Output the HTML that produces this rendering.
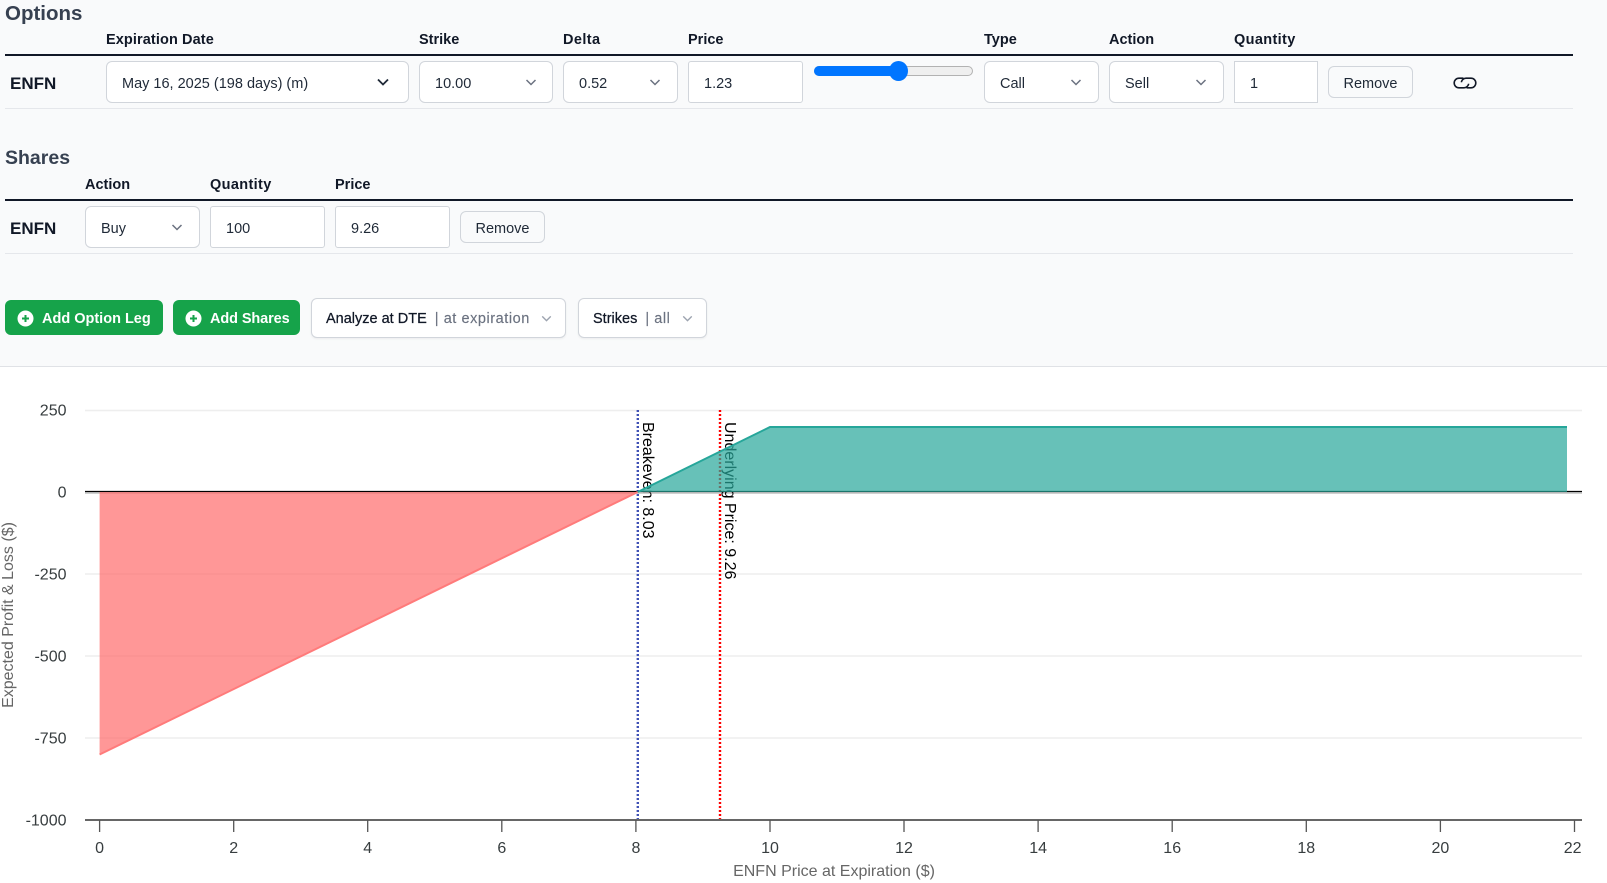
<!DOCTYPE html>
<html><head><meta charset="utf-8"><style>
html,body{margin:0;padding:0;width:1607px;height:883px;overflow:hidden;background:#f9fafb;font-family:"Liberation Sans",Arial,sans-serif;color:#111827}
.a{position:absolute;white-space:nowrap}
.h{font-weight:700;font-size:20.500px;color:#374151;line-height:24px}
.l{font-weight:700;font-size:14.500px;color:#111827;line-height:18px}
.t{font-weight:700;font-size:17px;color:#111827;line-height:22px}
.hr{position:absolute;left:5px;width:1568px;height:2px;background:#111827}
.dv{position:absolute;left:5px;width:1568px;height:1px;background:#e5e7eb}
.f{position:absolute;box-sizing:border-box;background:#fff;border:1px solid #d1d5db;font-size:14.500px;line-height:45px;color:#1f2937;padding-left:15px;white-space:nowrap}
.r{border-radius:6px}
.f svg{position:absolute;top:10px;width:20px;height:20px}
.b{position:absolute;box-sizing:border-box;border:1px solid #d1d5db;border-radius:6px;background:#f9fafb;font-size:14.500px;text-align:center;color:#1f2937;height:32px;line-height:35px}
.g{position:absolute;top:300px;height:35px;background:#16a34a;border-radius:6px;color:#fff;font-weight:700;font-size:14.500px;line-height:39px;white-space:nowrap;box-sizing:border-box}
.g svg{position:absolute;left:12px;top:9.500px;width:17px;height:17px}
.g span{position:absolute;left:37px}
.d{position:absolute;top:298px;height:40px;box-sizing:border-box;background:#fff;border:1px solid #d1d5db;border-radius:6px;box-shadow:0 1px 2px rgba(0,0,0,.06);font-size:14.500px;line-height:40px;white-space:nowrap;color:#111827}
.d i{font-style:normal;color:#6b7280;letter-spacing:.55px}
.d b{font-weight:400;position:absolute;left:14px;-webkit-text-stroke:.25px #111827}
.d i{-webkit-text-stroke:.15px #6b7280}
.d svg{position:absolute;top:11px;width:17px;height:17px}
</style></head><body>
<div class="a h" style="left:5px;top:2px">Options</div>
<div class="a l" style="left:106px;top:31px;letter-spacing:.1px">Expiration Date</div>
<div class="a l" style="left:419px;top:31px">Strike</div>
<div class="a l" style="left:563px;top:31px;letter-spacing:.4px">Delta</div>
<div class="a l" style="left:688px;top:31px">Price</div>
<div class="a l" style="left:984px;top:31px">Type</div>
<div class="a l" style="left:1109px;top:31px">Action</div>
<div class="a l" style="left:1234px;top:31px;letter-spacing:.35px">Quantity</div>
<div class="hr" style="top:54px"></div>
<div class="a t" style="left:10px;top:73px">ENFN</div>
<div class="f r" style="left:106px;top:61px;width:303px;height:42px">May 16, 2025 (198 days) (m)<svg style="left:266px" viewBox="0 0 20 20"><path d="M5 7.500l5 5 5-5" fill="none" stroke="#1f2937" stroke-width="1.800"/></svg></div>
<div class="f r" style="left:419px;top:61px;width:134px;height:42px">10.00<svg style="left:101px" viewBox="0 0 20 20"><path d="M5.500 8l4.500 4.500 4.500-4.500" fill="none" stroke="#6b7280" stroke-width="1.500"/></svg></div>
<div class="f r" style="left:563px;top:61px;width:115px;height:42px">0.52<svg style="left:81px" viewBox="0 0 20 20"><path d="M5.500 8l4.500 4.500 4.500-4.500" fill="none" stroke="#6b7280" stroke-width="1.500"/></svg></div>
<div class="f" style="left:688px;top:61px;width:115px;height:42px;border-radius:3px">1.23</div>
<div class="a" style="left:814px;top:66px;width:159px;height:10px;box-sizing:border-box;background:#efefef;border:1px solid #b2b2b2;border-radius:5px"></div>
<div class="a" style="left:814px;top:66px;width:86px;height:10px;background:#0075ff;border-radius:5px"></div>
<div class="a" style="left:888.500px;top:61px;width:19px;height:20px;background:#0075ff;border-radius:50%"></div>
<div class="f r" style="left:984px;top:61px;width:115px;height:42px">Call<svg style="left:81px" viewBox="0 0 20 20"><path d="M5.500 8l4.500 4.500 4.500-4.500" fill="none" stroke="#6b7280" stroke-width="1.500"/></svg></div>
<div class="f r" style="left:1109px;top:61px;width:115px;height:42px">Sell<svg style="left:81px" viewBox="0 0 20 20"><path d="M5.500 8l4.500 4.500 4.500-4.500" fill="none" stroke="#6b7280" stroke-width="1.500"/></svg></div>
<div class="f" style="left:1234px;top:61px;width:84px;height:42px;border-radius:0">1</div>
<div class="b" style="left:1328px;top:66px;width:85px">Remove</div>
<svg class="a" style="left:1453px;top:76px" width="24" height="14" viewBox="0 0 24 14"><g fill="none" stroke="#111827" stroke-width="1.600"><path d="M10.500 2.200H6a4.800 4.800 0 0 0 0 9.600h5a4.800 4.800 0 0 0 4.700-4"/><path d="M13.500 11.800H18a4.800 4.800 0 0 0 0-9.600h-5a4.800 4.800 0 0 0-4.700 4"/></g></svg>
<div class="dv" style="top:108px"></div>

<div class="a h" style="left:5px;top:146px;font-size:19.500px">Shares</div>
<div class="a l" style="left:85px;top:176px">Action</div>
<div class="a l" style="left:210px;top:176px;letter-spacing:.35px">Quantity</div>
<div class="a l" style="left:335px;top:176px">Price</div>
<div class="hr" style="top:199px"></div>
<div class="a t" style="left:10px;top:218px">ENFN</div>
<div class="f r" style="left:85px;top:206px;width:115px;height:42px">Buy<svg style="left:81px" viewBox="0 0 20 20"><path d="M5.500 8l4.500 4.500 4.500-4.500" fill="none" stroke="#6b7280" stroke-width="1.500"/></svg></div>
<div class="f" style="left:210px;top:206px;width:115px;height:42px;border-radius:3px">100</div>
<div class="f" style="left:335px;top:206px;width:115px;height:42px;border-radius:3px">9.26</div>
<div class="b" style="left:460px;top:211px;width:85px">Remove</div>
<div class="dv" style="top:253px"></div>

<div class="g" style="left:5px;width:158px"><svg viewBox="0 0 17 17"><circle cx="8.500" cy="8.500" r="8" fill="#fff"/><path d="M8.500 5v7M5 8.500h7" stroke="#16a34a" stroke-width="2"/></svg><span>Add Option Leg</span></div>
<div class="g" style="left:173px;width:127px"><svg viewBox="0 0 17 17"><circle cx="8.500" cy="8.500" r="8" fill="#fff"/><path d="M8.500 5v7M5 8.500h7" stroke="#16a34a" stroke-width="2"/></svg><span style="letter-spacing:-.1px">Add Shares</span></div>
<div class="d" style="left:311px;width:255px"><b>Analyze at DTE&nbsp; <i>| at expiration</i></b><svg style="left:226px" viewBox="0 0 20 20"><path d="M5 7.500l5 5 5-5" fill="none" stroke="#9ca3af" stroke-width="1.600"/></svg></div>
<div class="d" style="left:578px;width:129px"><b>Strikes&nbsp;&nbsp;<i>| all</i></b><svg style="left:100px" viewBox="0 0 20 20"><path d="M5 7.500l5 5 5-5" fill="none" stroke="#9ca3af" stroke-width="1.600"/></svg></div>

<div class="a" style="left:0;top:366px;width:1607px;height:517px;background:#fff;border-top:1px solid #e0e2e6;box-sizing:border-box"></div>

<svg class="a" style="left:0;top:0" width="1607" height="883" viewBox="0 0 1607 883" font-family="'Liberation Sans',Arial,sans-serif" font-size="16">
<g stroke="#eeeeee" stroke-width="1.500"><path d="M85 410.500H1582M85 574H1582M85 656H1582M85 738H1582"/></g>
<path d="M85 493H1582" stroke="#cfd0d0" stroke-width="2"/>
<g fill="#373d3f" text-anchor="end"><text x="66.500" y="415.500">250</text><text x="66.500" y="497.500">0</text><text x="66.500" y="579.500">-250</text><text x="66.500" y="661.500">-500</text><text x="66.500" y="743.500">-750</text><text x="66.500" y="825.500">-1000</text></g>
<text transform="translate(13,615) rotate(-90)" text-anchor="middle" fill="#666">Expected Profit &amp; Loss ($)</text>
<text x="834" y="876" text-anchor="middle" fill="#666">ENFN Price at Expiration ($)</text>
<text transform="translate(643,422) rotate(90)" fill="#000">Breakeven: 8.03</text>
<text transform="translate(725,422) rotate(90)" fill="#000">Underlying Price: 9.26</text>
<path d="M637.800 410V820" stroke="#3f51b5" stroke-width="2.400" stroke-dasharray="2 2"/>
<path d="M720 410V820" stroke="#f00" stroke-width="2.400" stroke-dasharray="2 2"/>
<path d="M85 491.500H1582" stroke="#000" stroke-width="1.200"/>
<path d="M99.600 492V754.500L637.700 492Z" fill="#ff6b6b" fill-opacity=".7"/>
<path d="M99.600 754.500L637.700 492" fill="none" stroke="#ff7b7b" stroke-width="2"/>
<path d="M637.700 492L770 427H1567V492Z" fill="#26a69a" fill-opacity=".7"/>
<path d="M637.700 492L770 427H1567" fill="none" stroke="#26a69a" stroke-width="2"/>
<path d="M85 820H1582" stroke="#666" stroke-width="2"/>
<g stroke="#555" stroke-width="1.300"><path d="M99.600 820V832M233.700 820V832M367.700 820V832M501.800 820V832M635.900 820V832M770 820V832M904 820V832M1038.100 820V832M1172.200 820V832M1306.300 820V832M1440.400 820V832M1574.500 820V832"/></g>
<g fill="#373d3f" text-anchor="middle"><text x="99.600" y="853">0</text><text x="233.700" y="853">2</text><text x="367.700" y="853">4</text><text x="501.800" y="853">6</text><text x="635.900" y="853">8</text><text x="770" y="853">10</text><text x="904" y="853">12</text><text x="1038.100" y="853">14</text><text x="1172.200" y="853">16</text><text x="1306.300" y="853">18</text><text x="1440.400" y="853">20</text><text x="1572.600" y="853">22</text></g>
</svg>
</body></html>
